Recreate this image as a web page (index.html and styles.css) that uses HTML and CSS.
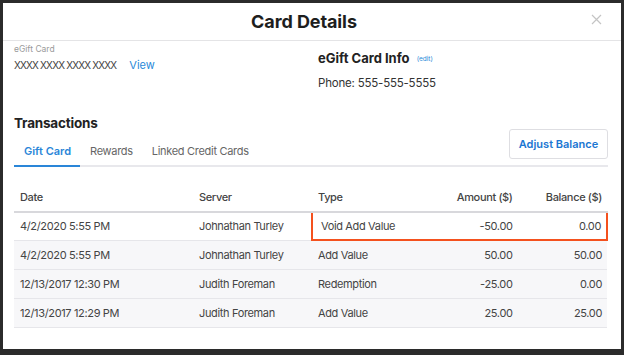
FILE: index.html
```html
<!DOCTYPE html>
<html lang="en">
<head>
    <meta charset="UTF-8">
    <meta name="viewport" content="width=device-width, initial-scale=1.0">
    <title>Card Details</title>
    <link rel="stylesheet" href="styles.css">
</head>
<body>
    <div class="modal">
        <header class="modal-header">
            <h2>Card Details</h2>
            <span class="close">
                <svg width="11" height="11" viewBox="0 0 11 11"><path d="M1 1L10 10M10 1L1 10" stroke="#c4c4c4" stroke-width="1.2"/></svg>
            </span>
        </header>

        <div class="modal-body">
            <section class="card-info">
                <div class="card-number">
                    <div class="label">eGift Card</div>
                    <div class="number"><span class="digits">XXXX XXXX XXXX XXXX</span> <a href="#" class="link">View</a></div>
                </div>
                <div class="card-contact">
                    <h3>eGift Card Info <a href="#" class="edit">(edit)</a></h3>
                    <p>Phone: 555-555-5555</p>
                </div>
            </section>

            <section class="transactions">
                <div class="transactions-top">
                    <div>
                        <h3>Transactions</h3>
                        <ul class="tabs">
                            <li class="active">Gift Card</li>
                            <li>Rewards</li>
                            <li>Linked Credit Cards</li>
                        </ul>
                    </div>
                    <button class="adjust-btn">Adjust Balance</button>
                </div>

                <table>
                    <thead>
                        <tr>
                            <th class="col-date">Date</th>
                            <th class="col-server">Server</th>
                            <th class="col-type">Type</th>
                            <th class="num">Amount ($)</th>
                            <th class="num">Balance ($)</th>
                        </tr>
                    </thead>
                    <tbody>
                        <tr class="flagged">
                            <td>4/2/2020 5:55 PM</td>
                            <td>Johnathan Turley</td>
                            <td>Void Add Value</td>
                            <td class="num">-50.00</td>
                            <td class="num">0.00</td>
                        </tr>
                        <tr>
                            <td>4/2/2020 5:55 PM</td>
                            <td>Johnathan Turley</td>
                            <td>Add Value</td>
                            <td class="num">50.00</td>
                            <td class="num">50.00</td>
                        </tr>
                        <tr>
                            <td>12/13/2017 12:30 PM</td>
                            <td>Judith Foreman</td>
                            <td>Redemption</td>
                            <td class="num">-25.00</td>
                            <td class="num">0.00</td>
                        </tr>
                        <tr>
                            <td>12/13/2017 12:29 PM</td>
                            <td>Judith Foreman</td>
                            <td>Add Value</td>
                            <td class="num">25.00</td>
                            <td class="num">25.00</td>
                        </tr>
                    </tbody>
                </table>
            </section>
        </div>
    </div>
</body>
</html>
```

FILE: styles.css
```css
body {
    font-family: Inter, "Noto Sans", sans-serif;
    margin: 0;
    padding: 3px;
    background-color: #2b2b2b;
    color: #333;
}

.modal {
    width: 618px;
    height: 346px;
    background-color: white;
    box-sizing: border-box;
}

.modal-header {
    height: 37px;
    border-bottom: 1px solid #e4e4e6;
    display: flex;
    align-items: center;
    justify-content: center;
    padding-right: 16px;
    position: relative;
}

.modal-header h2 {
    margin: 0;
    font-size: 18px;
    font-weight: 700;
    color: #1e1e1e;
    letter-spacing: -0.1px;
}

.close {
    position: absolute;
    right: 19px;
    top: 11px;
    line-height: 0;
}

.modal-body {
    padding: 0 13px 0 11px;
}

/* Card info */
.card-info {
    display: grid;
    grid-template-columns: 304px 1fr;
    height: 70px;
}

.label {
    font-size: 8.5px;
    color: #9a9a9a;
    margin-top: 3px;
}

.number {
    font-size: 10.5px;
    color: #444;
    margin-top: 4px;
}

.digits {
    font-size: 10px;
    letter-spacing: -0.8px;
}

.link {
    color: #2a8ad8;
    text-decoration: none;
    font-size: 11px;
    margin-left: 10px;
}

.card-contact h3 {
    margin: 9px 0 0;
    font-size: 13px;
    font-weight: 700;
    color: #222;
}

.edit {
    font-size: 6.5px;
    font-weight: 400;
    color: #2a8ad8;
    text-decoration: none;
    margin-left: 4px;
    vertical-align: 2px;
}

.card-contact p {
    margin: 10px 0 0;
    font-size: 11.5px;
    color: #333;
    letter-spacing: -0.2px;
}

/* Transactions */
.transactions-top {
    display: flex;
    justify-content: space-between;
    align-items: flex-start;
    border-bottom: 2px solid #e8e8ec;
}

.transactions h3 {
    margin: 4px 0 0;
    font-size: 13.5px;
    font-weight: 700;
    color: #222;
    letter-spacing: -0.2px;
}

.tabs {
    list-style: none;
    margin: 10px 0 0;
    padding: 0;
    display: flex;
}

.tabs li {
    font-size: 11px;
    color: #666;
    letter-spacing: -0.3px;
    padding: 3px 9px 7px 10px;
    margin-bottom: -2px;
    border-bottom: 2px solid transparent;
}

.tabs li.active {
    color: #2a86d8;
    font-weight: 600;
    letter-spacing: 0;
    border-bottom-color: #2a86d8;
}

.adjust-btn {
    margin-top: 18px;
    width: 99px;
    height: 30px;
    background-color: white;
    border: 1px solid #dedee2;
    border-radius: 3px;
    color: #1b76d2;
    font-family: inherit;
    font-size: 11px;
    font-weight: 600;
    padding: 0;
}

table {
    width: 100%;
    border-collapse: collapse;
    margin-top: 15px;
    font-size: 11px;
    letter-spacing: -0.35px;
}

th {
    font-weight: 500;
    color: #444;
    text-align: left;
    height: 29px;
    border-bottom: 2px solid #d8d8dc;
    padding: 0 6px;
}

td {
    height: 28px;
    padding: 0 6px;
    color: #444;
    background-color: #f7f7f9;
    border-bottom: 1px solid #e6e6ea;
}

.col-date {
    width: 167px;
}

.col-server {
    width: 107px;
}

.num {
    text-align: right;
}

th.num:last-child,
td.num:last-child {
    padding-right: 5px;
}

tr.flagged td {
    height: 26px;
    background-color: white;
    border-top: 2px solid #f4511e;
    border-bottom: 2px solid #f4511e;
}

tr.flagged td:nth-child(-n+2) {
    border-top: none;
    border-bottom: 1px solid #e6e6ea;
}

tr.flagged td:nth-child(3) {
    border-left: 2px solid #f4511e;
    padding-left: 8px;
}

tr.flagged td:last-child {
    border-right: 2px solid #f4511e;
}
```
